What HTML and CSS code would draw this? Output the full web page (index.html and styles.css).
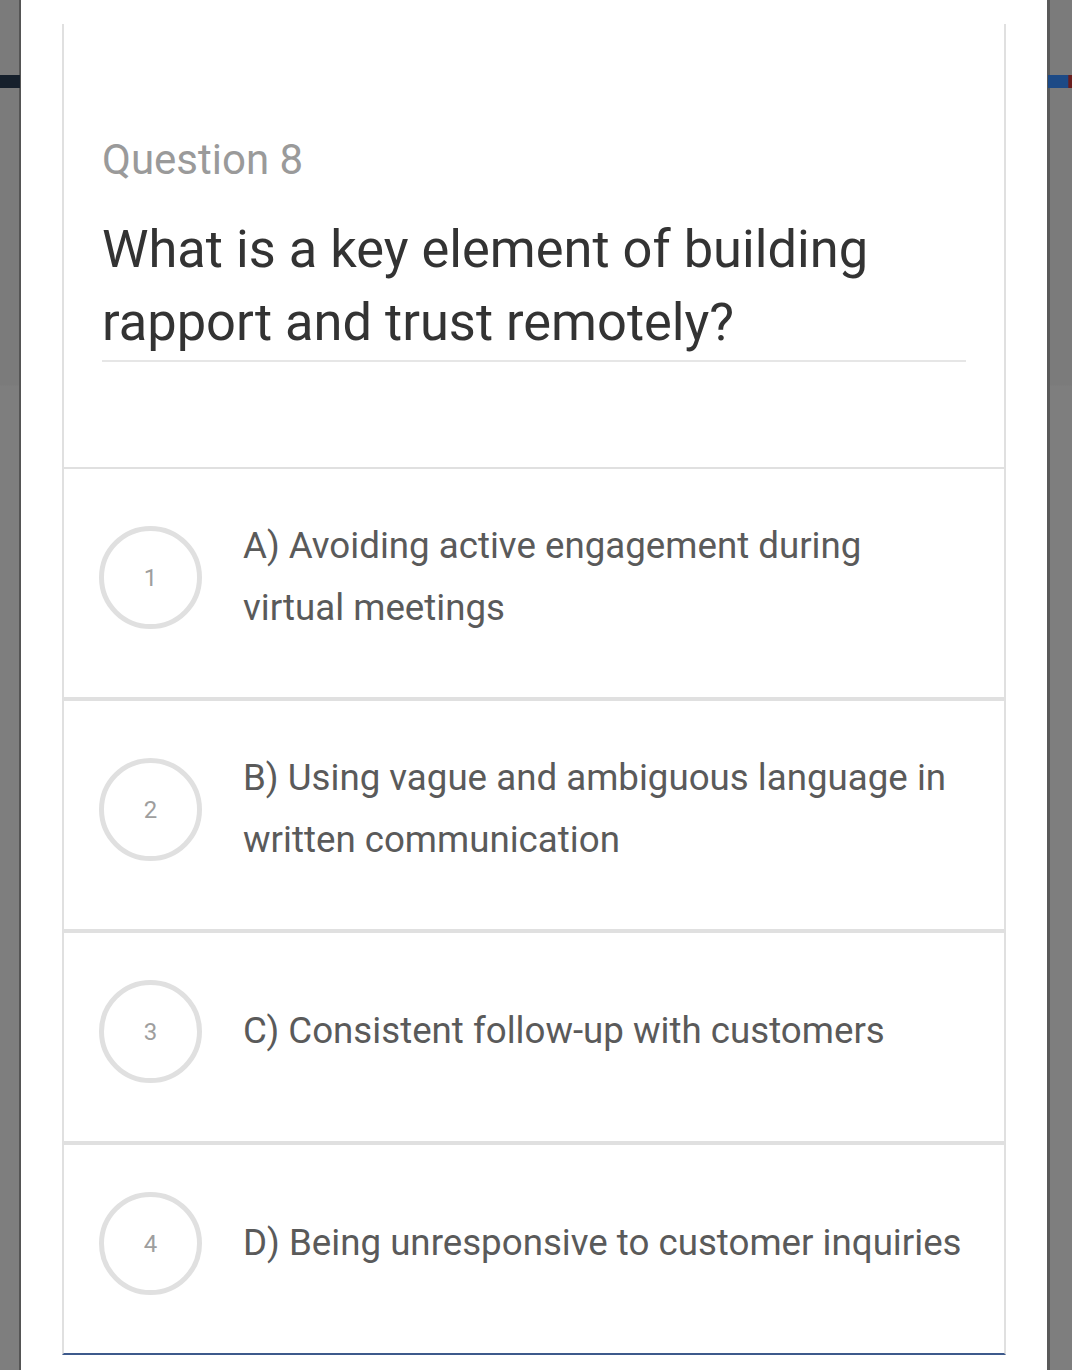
FILE: index.html
```html
<!DOCTYPE html>
<html>
<head>
<meta charset="utf-8">
<link rel="stylesheet" href="styles.css">
</head>
<body>
<div class="screen">
  <div class="side side-left"><div class="band band-left"></div></div>
  <div class="panel">
    <div class="card">
      <div class="head">
        <div class="qnum">Question 8</div>
        <div class="qtext">What is a key element of building rapport and trust remotely?</div>
      </div>
      <div class="opt">
        <div class="circle">1</div>
        <div class="otext">A) Avoiding active engagement during virtual meetings</div>
      </div>
      <div class="opt">
        <div class="circle">2</div>
        <div class="otext">B) Using vague and ambiguous language in written communication</div>
      </div>
      <div class="opt">
        <div class="circle">3</div>
        <div class="otext">C) Consistent follow-up with customers</div>
      </div>
      <div class="opt opt-last">
        <div class="circle">4</div>
        <div class="otext">D) Being unresponsive to customer inquiries</div>
      </div>
    </div>
  </div>
  <div class="side side-right"><div class="band band-right"></div></div>
</div>
</body>
</html>
```

FILE: styles.css
```css
html, body {
  margin: 0;
  padding: 0;
  background: #ffffff;
}
.screen {
  display: flex;
  width: 1072px;
  height: 1370px;
  overflow: hidden;
  font-family: Roboto, "Liberation Sans", sans-serif;
}
.side {
  flex: none;
  height: 100%;
  background: linear-gradient(to bottom, #7b7b7b 0, #7b7b7b 385px, #7e7e7e 386px, #7e7e7e 100%);
}
.side-left {
  width: 21px;
  box-shadow: inset -2px 0 0 #555555;
  padding-top: 75px;
  box-sizing: border-box;
}
.side-right {
  width: 25px;
  box-shadow: inset 3px 0 0 #5a5a5a;
  padding-top: 75px;
  box-sizing: border-box;
}
.band {
  height: 13px;
}
.band-left {
  background: #16202c;
  margin-right: 1px;
}
.band-right {
  background: linear-gradient(to right, #1d4a86 0, #1d4a86 84%, #6a1e1e 86%, #6a1e1e 100%);
  margin-left: 1px;
}
.panel {
  flex: 1;
  background: #ffffff;
  padding-top: 24px;
}
.card {
  margin-left: 41px;
  width: 944px;
  box-sizing: border-box;
}
.head {
  border-left: 2px solid #e0e0e0;
  border-right: 2px solid #e0e0e0;
  padding: 111px 38px 105px 38px;
}
.qnum {
  font-size: 42px;
  line-height: 50px;
  color: #9a9a9a;
}
.qtext {
  margin-top: 28px;
  font-size: 52.4px;
  line-height: 73px;
  color: #333333;
  padding-bottom: 1px;
  border-bottom: 2px solid #e6e6e6;
}
.opt {
  display: flex;
  align-items: center;
  border: 2px solid #e0e0e0;
  padding: 46px 38px 58px 35px;
  min-height: 104px;
}
.opt-last {
  border-bottom: 2px solid #3d5a8c;
}
.circle {
  flex: none;
  width: 93px;
  height: 93px;
  border: 5.5px solid #e0e0e0;
  border-radius: 50%;
  display: flex;
  align-items: center;
  justify-content: center;
  font-size: 24px;
  padding-top: 2px;
  box-sizing: content-box;
  height: 91px;
  color: #9e9e9e;
  margin-right: 41px;
}
.otext {
  font-size: 36.7px;
  line-height: 62px;
  color: #5a5a5a;
}
```
